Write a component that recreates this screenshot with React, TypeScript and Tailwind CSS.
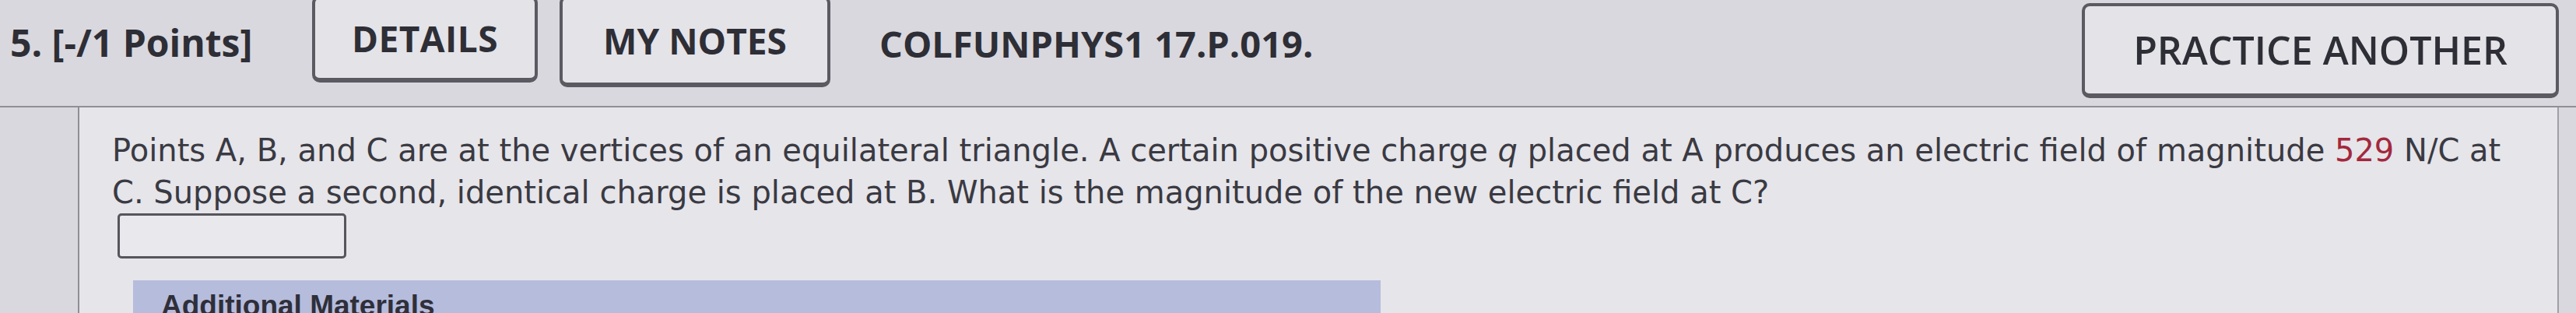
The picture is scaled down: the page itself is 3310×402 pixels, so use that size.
export default function App() {
  return (
    <div className="w-[3310px] h-[402px] overflow-hidden bg-[#d9d8de] text-[#2e2e36]">
      {/* question header */}
      <div className="h-[138px] flex items-start border-b-2 border-[#908f97] pl-[13px] font-['Open_Sans',sans-serif]">
        <div className="w-[388px] h-[110px] flex items-center text-[48px] font-bold whitespace-nowrap">
          5. [-/1 Points]
        </div>
        <button className="w-[290px] h-[112px] -mt-[6px] flex items-center justify-center rounded-[10px] border-[4px] border-b-[6px] border-[#5b5a62] bg-[#e4e3e8] text-[46px] font-bold tracking-[0.01em] text-[#2e2e36]">
          DETAILS
        </button>
        <button className="w-[348px] h-[118px] -mt-[6px] ml-[28px] flex items-center justify-center rounded-[10px] border-[4px] border-b-[6px] border-[#5b5a62] bg-[#e4e3e8] text-[46px] font-bold text-[#2e2e36]">
          MY NOTES
        </button>
        <div className="ml-[63px] h-[112px] flex items-center text-[47px] font-bold whitespace-nowrap">
          COLFUNPHYS1 17.P.019.
        </div>
        <div className="flex-1" />
        <button className="w-[613px] h-[122px] mt-[4px] mr-[22px] flex items-center justify-center rounded-[10px] border-[4px] border-b-[6px] border-[#5b5a62] bg-[#e4e3e8] text-[50px] font-semibold text-[#2e2e36]">
          PRACTICE ANOTHER
        </button>
      </div>

      {/* question body */}
      <div className="flex h-[264px]">
        <div className="w-[102px] shrink-0 border-r-2 border-[#8f8e95]" />
        <div className="w-[3186px] shrink-0 border-r-2 border-[#a09fa6] bg-[#e6e5ea] pl-[42px] pt-[28px] pr-[40px]">
          <p className="text-[40px] leading-[54px] text-[#3a3a42] font-['DejaVu_Sans','Verdana',sans-serif]">
            Points A, B, and C are at the vertices of an equilateral triangle. A certain positive charge{" "}
            <i>q</i> placed at A produces an electric field of magnitude{" "}
            <span className="text-[#a3283c]">529</span> N/C at C. Suppose a second, identical charge is placed at
            B. What is the magnitude of the new electric field at C?
          </p>
          <div className="ml-[7px] w-[294px] h-[58px] rounded-[5px] border-[3px] border-[#56555c] bg-[#e9e8ed]" />
          <div className="mt-[28px] ml-[27px] w-[1603px] h-[60px] bg-[#b6bcdc] pl-[36px] pt-[14px]">
            <div className="text-[37px] leading-none font-bold text-[#2f2f3a] font-['Liberation_Sans',Arial,sans-serif]">
              Additional Materials
            </div>
          </div>
        </div>
      </div>
    </div>
  );
}
